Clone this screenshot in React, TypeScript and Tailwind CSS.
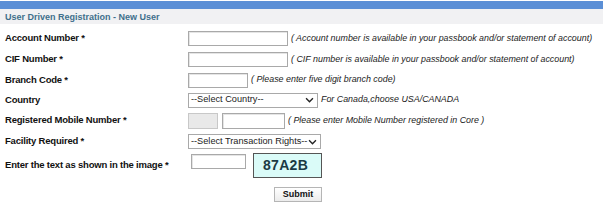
import type { ReactNode } from 'react';

const inputCls = 'h-[15px] border border-[#a9a9a9] bg-white shadow-[inset_1px_1px_0_#e5e5e5]';
const labelCls = 'w-[188px] shrink-0 whitespace-nowrap pl-[5px] text-[9.5px] font-bold tracking-[-0.2px] text-[#111]';

function Row({ label, h, children }: { label: string; h: string; children: ReactNode }) {
  return (
    <div className={`flex items-center ${h}`}>
      <div className={labelCls}>{label}</div>
      <div className="flex items-center">{children}</div>
    </div>
  );
}

function Hint({ children }: { children: ReactNode }) {
  return <span className="ml-[3px] whitespace-nowrap text-[8.9px] italic text-[#222]">{children}</span>;
}

function FakeSelect({ w, text }: { w: string; text: string }) {
  return (
    <div className={`${w} flex h-[15px] items-center justify-between border border-[#a9a9a9] bg-white pl-[2px] pr-[3px] text-[9.2px] text-[#222]`}>
      <span className="whitespace-nowrap">{text}</span>
      <svg width="9" height="6" viewBox="0 0 10 7">
        <path d="M1 1.5 L5 5.5 L9 1.5" fill="none" stroke="#222" strokeWidth="1.6" />
      </svg>
    </div>
  );
}

export default function App() {
  return (
    <div className="h-[208px] w-[606px] bg-white font-['Liberation_Sans',Arial,sans-serif]">
      <div className="pt-[1px]">
        <div className="mr-[3px] h-[8px] bg-[#5b8fd6]" />
        <div className="mr-[3px] flex h-[15px] items-center bg-[#f1f1f3] pl-[5px] pt-[2px] text-[9px] font-bold text-[#3f6f8c]">
          User Driven Registration - New User
        </div>
      </div>

      <div className="pt-[4px]">
        <Row label="Account Number *" h="h-[21px]">
          <div className={`${inputCls} w-[100px]`} />
          <Hint>( Account number is available in your passbook and/or statement of account)</Hint>
        </Row>
        <Row label="CIF Number *" h="h-[21px]">
          <div className={`${inputCls} w-[100px]`} />
          <Hint>( CIF number is available in your passbook and/or statement of account)</Hint>
        </Row>
        <Row label="Branch Code *" h="h-[20px]">
          <div className={`${inputCls} w-[60px]`} />
          <Hint>( Please enter five digit branch code)</Hint>
        </Row>
        <Row label="Country" h="h-[20px]">
          <FakeSelect w="w-[130px]" text="--Select Country--" />
          <Hint>For Canada,choose USA/CANADA</Hint>
        </Row>
        <Row label="Registered Mobile Number *" h="h-[21px]">
          <div className="h-[16px] w-[30px] border border-[#c8c8c8] bg-[#e9e9e9]" />
          <div className={`${inputCls} ml-[4px] h-[16px] w-[63px]`} />
          <Hint>( Please enter Mobile Number registered in Core )</Hint>
        </Row>
        <Row label="Facility Required *" h="h-[21px]">
          <FakeSelect w="w-[133px]" text="--Select Transaction Rights--" />
        </Row>
        <div className="flex h-[26px] items-center">
          <div className={labelCls}>Enter the text as shown in the image *</div>
          <div className="flex items-start">
            <div className={`${inputCls} ml-[3px] mt-[1px] w-[55px]`} />
            <div className="ml-[7px] flex h-[25px] w-[69px] items-center border border-[#555] bg-[#dafbf8] pl-[9px] text-[14px] font-bold tracking-[0.3px] text-[#1b3a44]">
              87A2B
            </div>
          </div>
        </div>
        <div className="mt-[9px] flex pl-[274px]">
          <button className="h-[15px] w-[48px] border border-[#b5b5b5] bg-gradient-to-b from-white to-[#ececec] text-[9px] font-bold leading-none text-[#111]">
            Submit
          </button>
        </div>
      </div>
    </div>
  );
}
